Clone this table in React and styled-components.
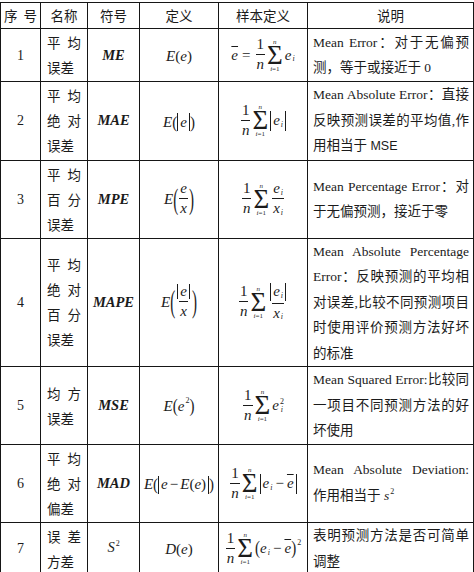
import React from 'react'
import styled, { createGlobalStyle } from 'styled-components'

const GlobalStyle = createGlobalStyle`
  html, body { margin: 0; padding: 0; background: #fff; }
  body {
    font-family: "Liberation Serif", "Noto Sans CJK SC", serif;
    color: #1b1b1b;
  }
`

const Page = styled.div`
  width: 474px;
  height: 572px;
  padding-top: 2px;
  box-sizing: border-box;
  overflow: hidden;
`

const Table = styled.table`
  border-collapse: collapse;
  table-layout: fixed;
  width: 473px;
`

const Row = styled.tr`
  height: ${p => p.$h}px;
  &:last-child td { border-bottom: 2px solid #9c9c9c; }
`

const Cell = styled.td`
  border: 1px solid #161616;
  padding: ${p => p.$pad || '0 3px'};
  text-align: center;
  vertical-align: middle;
  font-size: 14px;
  line-height: 25px;
`

const HeadCell = styled(Cell).attrs({ as: 'th' })`
  font-weight: normal;
  font-family: "Noto Sans CJK SC", sans-serif;
  font-size: 13.5px;
`

const Spread = styled.div`
  display: flex;
  justify-content: ${p => (p.$spread ? 'space-between' : 'flex-start')};
  font-family: "Noto Sans CJK SC", sans-serif;
  font-size: 13.5px;
  line-height: 25px;
`

const Num = styled.span`
  font-size: 14px;
`

const Sym = styled.span`
  font-size: 14.5px;
  font-style: italic;
  font-weight: ${p => (p.$plain ? 'normal' : 'bold')};
`

const DescLine = styled.div`
  text-align: ${p => (p.$last ? 'left' : 'justify')};
  text-align-last: ${p => (p.$last ? 'left' : 'justify')};
  font-size: 13.5px;
  line-height: 25.5px;
  font-family: "Liberation Serif", "Noto Sans CJK SC", serif;
`

const Sans = styled.span`
  font-family: "Liberation Sans", sans-serif;
  font-size: 12.5px;
`

/* math */
const MathBox = styled.span`
  display: inline-flex;
  align-items: center;
  font-family: "Liberation Serif", serif;
  font-size: 15px;
  line-height: 1;
  white-space: nowrap;
  vertical-align: middle;
`

const V = styled.i`
  font-style: italic;
  ${p => p.$bar && 'text-decoration: overline; text-decoration-thickness: 1px;'}
`

const Op = styled.span`
  margin: 0 ${p => p.$gap ?? 3}px;
`

const FracBox = styled.span`
  display: inline-flex;
  flex-direction: column;
  align-items: center;
  margin: 0 1px;
`

const FracPart = styled.span`
  display: inline-flex;
  align-items: center;
  justify-content: center;
  padding: 1px 1px 2px;
  line-height: 1;
  ${p => p.$den && 'border-top: 1px solid #1b1b1b; padding-top: 2px;'}
`

const Frac = ({ top, bottom }) => (
  <FracBox>
    <FracPart>{top}</FracPart>
    <FracPart $den>{bottom}</FracPart>
  </FracBox>
)

const SumBox = styled.span`
  display: inline-flex;
  flex-direction: column;
  align-items: center;
  margin: 0 2px 0 1px;
`

const Limit = styled.span`
  font-size: 7px;
  line-height: 8px;
  font-style: italic;
`

const Sigma = styled.span`
  font-size: 27px;
  line-height: 19px;
`

const Sum = () => (
  <SumBox>
    <Limit>n</Limit>
    <Sigma>Σ</Sigma>
    <Limit>i<span style={{ fontStyle: 'normal' }}>=1</span></Limit>
  </SumBox>
)

const Scripts = styled.span`
  display: inline-flex;
  flex-direction: column;
  font-size: 8px;
  line-height: 1;
  margin-left: 1px;
`

const Sub = styled.span`
  font-size: 8px;
  font-style: italic;
  position: relative;
  top: 4px;
  margin-left: 1px;
`

const Sup = styled.span`
  font-size: 8px;
  position: relative;
  top: -6px;
  margin-left: 1px;
`

const Glyph = styled.span`
  display: inline-block;
  transform: scaleY(${p => p.$scale || 1});
`

const AbsBox = styled.span`
  display: inline-flex;
  align-items: center;
  border-left: 1px solid #1b1b1b;
  border-right: 1px solid #1b1b1b;
  padding: 1px 2px;
  height: ${p => p.$h || 15}px;
`

const Paren = ({ scale, children }) => (
  <>
    <Glyph $scale={scale}>(</Glyph>
    {children}
    <Glyph $scale={scale}>)</Glyph>
  </>
)

const Ei = () => (
  <>
    <V>e</V>
    <Sub>i</Sub>
  </>
)

const rows = [
  {
    h: 53,
    no: '1',
    name: ['平均', '误差'],
    sym: <Sym>ME</Sym>,
    def: (
      <MathBox>
        <V>E</V><Paren><V>e</V></Paren>
      </MathBox>
    ),
    sample: (
      <MathBox>
        <V $bar>e</V><Op $gap={4}>=</Op><Frac top="1" bottom={<V>n</V>} /><Sum /><Ei />
      </MathBox>
    ),
    desc: ['Mean  Error：对于无偏预', '测，等于或接近于 0'],
  },
  {
    h: 77,
    no: '2',
    name: ['平均', '绝对', '误差'],
    sym: <Sym>MAE</Sym>,
    def: (
      <MathBox>
        <V>E</V><Paren scale={1.15}><AbsBox $h={16}><V>e</V></AbsBox></Paren>
      </MathBox>
    ),
    sample: (
      <MathBox>
        <Frac top="1" bottom={<V>n</V>} /><Sum /><AbsBox $h={18}><Ei /></AbsBox>
      </MathBox>
    ),
    desc: ['Mean Absolute Error：直接', '反映预测误差的平均值,作', <>用相当于 <Sans>MSE</Sans></>],
  },
  {
    h: 78,
    no: '3',
    name: ['平均', '百分', '误差'],
    sym: <Sym>MPE</Sym>,
    def: (
      <MathBox>
        <V>E</V><Paren scale={2}><Frac top={<V>e</V>} bottom={<V>x</V>} /></Paren>
      </MathBox>
    ),
    sample: (
      <MathBox>
        <Frac top="1" bottom={<V>n</V>} /><Sum /><Frac top={<Ei />} bottom={<><V>x</V><Sub>i</Sub></>} />
      </MathBox>
    ),
    desc: ['Mean Percentage Error：对', '于无偏预测，接近于零'],
  },
  {
    h: 126,
    no: '4',
    name: ['平均', '绝对', '百分', '误差'],
    sym: <Sym>MAPE</Sym>,
    def: (
      <MathBox>
        <V>E</V>
        <Paren scale={2.1}>
          <Frac top={<AbsBox $h={13}><V>e</V></AbsBox>} bottom={<V>x</V>} />
        </Paren>
      </MathBox>
    ),
    sample: (
      <MathBox>
        <Frac top="1" bottom={<V>n</V>} /><Sum />
        <Frac top={<AbsBox $h={16}><Ei /></AbsBox>} bottom={<><V>x</V><Sub>i</Sub></>} />
      </MathBox>
    ),
    desc: [
      'Mean  Absolute  Percentage',
      'Error：反映预测的平均相',
      '对误差,比较不同预测项目',
      '时使用评价预测方法好坏',
      '的标准',
    ],
  },
  {
    h: 78,
    no: '5',
    name: ['均方', '误差'],
    sym: <Sym>MSE</Sym>,
    def: (
      <MathBox>
        <V>E</V><Paren scale={1.2}><V>e</V><Sup>2</Sup></Paren>
      </MathBox>
    ),
    sample: (
      <MathBox>
        <Frac top="1" bottom={<V>n</V>} /><Sum /><V>e</V>
        <Scripts><span>2</span><i>i</i></Scripts>
      </MathBox>
    ),
    desc: ['Mean Squared Error:比较同', '一项目不同预测方法的好', '坏使用'],
  },
  {
    h: 78,
    no: '6',
    name: ['平均', '绝对', '偏差'],
    sym: <Sym>MAD</Sym>,
    def: (
      <MathBox>
        <V>E</V>
        <Paren scale={1.15}>
          <AbsBox $h={16}>
            <V>e</V><Op $gap={2}>−</Op><V>E</V><Paren><V>e</V></Paren>
          </AbsBox>
        </Paren>
      </MathBox>
    ),
    sample: (
      <MathBox>
        <Frac top="1" bottom={<V>n</V>} /><Sum />
        <AbsBox $h={18}><Ei /><Op $gap={3}>−</Op><V $bar>e</V></AbsBox>
      </MathBox>
    ),
    desc: ['Mean Absolute Deviation:', <>作用相当于 <V>s</V><Sup>2</Sup></>],
  },
  {
    h: 51,
    no: '7',
    name: ['误差', '方差'],
    sym: <Sym $plain>S<Sup style={{ fontStyle: 'normal' }}>2</Sup></Sym>,
    def: (
      <MathBox>
        <V>D</V><Paren><V>e</V></Paren>
      </MathBox>
    ),
    sample: (
      <MathBox>
        <Frac top="1" bottom={<V>n</V>} /><Sum />
        <Paren scale={1.25}><Ei /><Op $gap={3}>−</Op><V $bar>e</V></Paren><Sup>2</Sup>
      </MathBox>
    ),
    desc: ['表明预测方法是否可简单', '调整'],
  },
]

const heads = ['序号', '名称', '符号', '定义', '样本定义', '说明']

export default function App() {
  return (
    <Page>
      <GlobalStyle />
      <Table>
        <colgroup>
          <col style={{ width: 40 }} />
          <col style={{ width: 47 }} />
          <col style={{ width: 52 }} />
          <col style={{ width: 79 }} />
          <col style={{ width: 89 }} />
          <col style={{ width: 166 }} />
        </colgroup>
        <thead>
          <Row $h={26}>
            {heads.map((h, i) => (
              <HeadCell key={h} $pad={i === 0 ? '0 3px' : '0'}>
                {i === 0 ? <Spread $spread>{h.split('').map(c => <span key={c}>{c}</span>)}</Spread> : h}
              </HeadCell>
            ))}
          </Row>
        </thead>
        <tbody>
          {rows.map(r => (
            <Row key={r.no} $h={r.h}>
              <Cell><Num>{r.no}</Num></Cell>
              <Cell $pad="0 6px">
                {r.name.map((n, i) => (
                  <Spread key={i} $spread={i < r.name.length - 1}>
                    <span>{n[0]}</span><span>{n[1]}</span>
                  </Spread>
                ))}
              </Cell>
              <Cell>{r.sym}</Cell>
              <Cell $pad="0 2px">{r.def}</Cell>
              <Cell $pad="0 2px">{r.sample}</Cell>
              <Cell $pad="0 4px 0 5px">
                {r.desc.map((d, i) => (
                  <DescLine key={i} $last={i === r.desc.length - 1}>{d}</DescLine>
                ))}
              </Cell>
            </Row>
          ))}
        </tbody>
      </Table>
    </Page>
  )
}
